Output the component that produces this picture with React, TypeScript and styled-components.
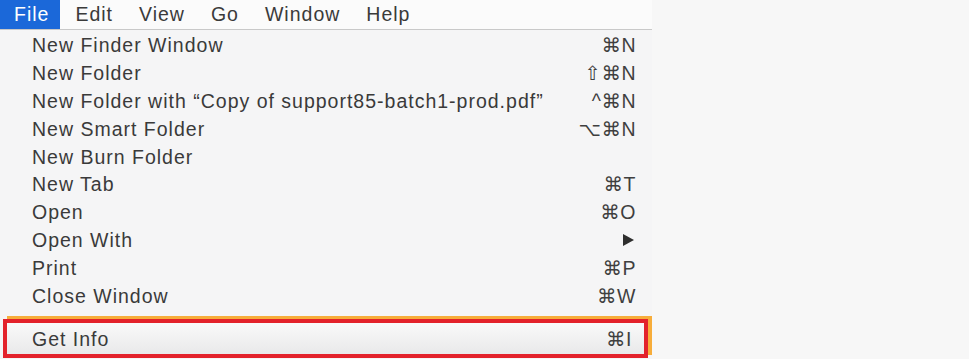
import styled, { createGlobalStyle } from "styled-components";

type TItem = {
  label: string;
  shortcut?: string;
  submenu?: boolean;
};

const menus = ["File", "Edit", "View", "Go", "Window", "Help"];

const items: TItem[] = [
  { label: "New Finder Window", shortcut: "⌘N" },
  { label: "New Folder", shortcut: "⇧⌘N" },
  { label: "New Folder with “Copy of support85-batch1-prod.pdf”", shortcut: "^⌘N" },
  { label: "New Smart Folder", shortcut: "⌥⌘N" },
  { label: "New Burn Folder" },
  { label: "New Tab", shortcut: "⌘T" },
  { label: "Open", shortcut: "⌘O" },
  { label: "Open With", submenu: true },
  { label: "Print", shortcut: "⌘P" },
  { label: "Close Window", shortcut: "⌘W" },
];

const GlobalStyle = createGlobalStyle`
  html, body {
    margin: 0;
    padding: 0;
    background: #f7f7f7;
  }
  body {
    font-family: "Liberation Sans", Arial, "DejaVu Sans", sans-serif;
    font-size: 19.5px;
    letter-spacing: 1px;
    color: #3a3a3a;
  }
`;

const App = () => {
  return (
    <>
      <GlobalStyle />
      <Screen>
        <MenuBar>
          {menus.map((m, i) => (
            <MenuTitle key={m} $active={i === 0}>
              {m}
            </MenuTitle>
          ))}
        </MenuBar>
        <Menu>
          {items.map((item) => (
            <Row key={item.label}>
              <span>{item.label}</span>
              <Shortcut>
                {item.submenu ? <Arrow /> : item.shortcut}
              </Shortcut>
            </Row>
          ))}
          <Separator />
          <Highlight>
            <Row>
              <span>Get Info</span>
              <Shortcut>⌘I</Shortcut>
            </Row>
          </Highlight>
        </Menu>
      </Screen>
    </>
  );
};

export default App;

const Screen = styled.div`
  width: 652px;
  height: 359px;
  display: flex;
  flex-direction: column;
`;

const MenuBar = styled.div`
  height: 29px;
  display: flex;
  align-items: stretch;
  background: #fbfbfb;
  border-bottom: 1px solid #c9c9c9;
`;

const MenuTitle = styled.div<{ $active?: boolean }>`
  display: flex;
  align-items: center;
  padding: ${({ $active }) => ($active ? "0 11px 0 14px" : "0 13px")};
  margin-right: ${({ $active }) => ($active ? "2px" : "0")};
  background: ${({ $active }) => ($active ? "#1b68d9" : "transparent")};
  color: ${({ $active }) => ($active ? "#ffffff" : "#3a3a3a")};
`;

const Menu = styled.div`
  flex: 1;
  display: flex;
  flex-direction: column;
  padding-top: 2px;
  background: #f5f5f6;
`;

const Row = styled.div`
  height: 27.8px;
  display: flex;
  align-items: center;
  justify-content: space-between;
  padding: 0 16px 0 32px;
`;

const Shortcut = styled.span`
  display: flex;
  align-items: center;
  color: #3f3f3f;
  letter-spacing: 0.5px;
`;

const Arrow = styled.span`
  width: 0;
  height: 0;
  margin-right: 2px;
  border-top: 6px solid transparent;
  border-bottom: 6px solid transparent;
  border-left: 11px solid #2e2e2e;
`;

const Separator = styled.div`
  height: 9px;
`;

const Highlight = styled.div`
  margin: 0 4px 0 3px;
  border: 4px solid #e3222b;
  box-shadow: 4px -3px 0 0 #f7ad3a;
  padding-top: 3px;
  background: linear-gradient(#f9f9f9, #e9e9ea);

  ${Row} {
    padding: 0 12px 0 25px;
    height: 28px;
  }
`;
